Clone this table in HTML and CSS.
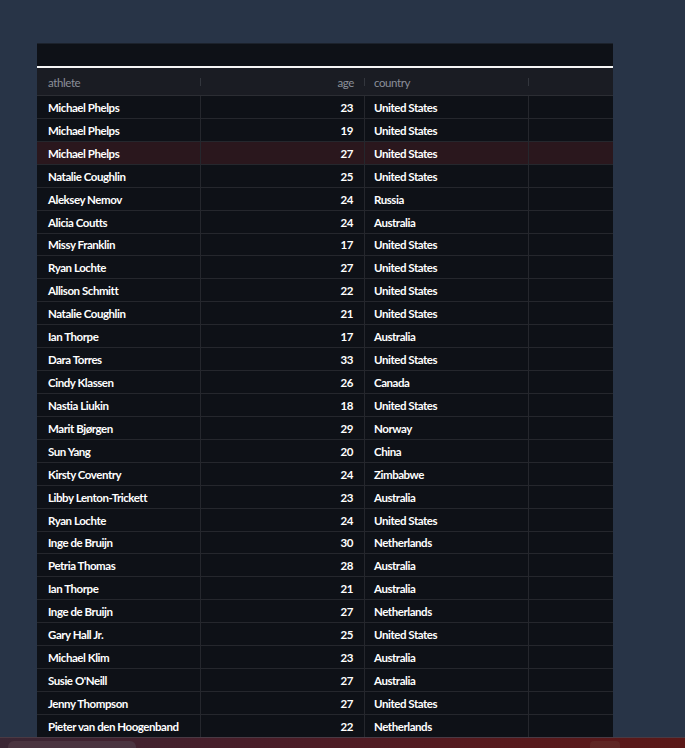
FILE: index.html
```html
<!DOCTYPE html>
<html>
<head>
<meta charset="utf-8">
<link rel="stylesheet" href="styles.css">
</head>
<body>
<div class="frame">
  <div class="toolbar"></div>
  <div class="grid">
    <div class="row head">
      <div class="cell">athlete<span class="grip"></span></div>
      <div class="cell num">age<span class="grip"></span></div>
      <div class="cell">country<span class="grip"></span></div>
      <div class="cell"></div>
    </div>
    <div class="row"><div class="cell">Michael Phelps</div><div class="cell num">23</div><div class="cell">United States</div><div class="cell"></div></div>
    <div class="row"><div class="cell">Michael Phelps</div><div class="cell num">19</div><div class="cell">United States</div><div class="cell"></div></div>
    <div class="row sel"><div class="cell">Michael Phelps</div><div class="cell num">27</div><div class="cell">United States</div><div class="cell"></div></div>
    <div class="row"><div class="cell">Natalie Coughlin</div><div class="cell num">25</div><div class="cell">United States</div><div class="cell"></div></div>
    <div class="row"><div class="cell">Aleksey Nemov</div><div class="cell num">24</div><div class="cell">Russia</div><div class="cell"></div></div>
    <div class="row"><div class="cell">Alicia Coutts</div><div class="cell num">24</div><div class="cell">Australia</div><div class="cell"></div></div>
    <div class="row"><div class="cell">Missy Franklin</div><div class="cell num">17</div><div class="cell">United States</div><div class="cell"></div></div>
    <div class="row"><div class="cell">Ryan Lochte</div><div class="cell num">27</div><div class="cell">United States</div><div class="cell"></div></div>
    <div class="row"><div class="cell">Allison Schmitt</div><div class="cell num">22</div><div class="cell">United States</div><div class="cell"></div></div>
    <div class="row"><div class="cell">Natalie Coughlin</div><div class="cell num">21</div><div class="cell">United States</div><div class="cell"></div></div>
    <div class="row"><div class="cell">Ian Thorpe</div><div class="cell num">17</div><div class="cell">Australia</div><div class="cell"></div></div>
    <div class="row"><div class="cell">Dara Torres</div><div class="cell num">33</div><div class="cell">United States</div><div class="cell"></div></div>
    <div class="row"><div class="cell">Cindy Klassen</div><div class="cell num">26</div><div class="cell">Canada</div><div class="cell"></div></div>
    <div class="row"><div class="cell">Nastia Liukin</div><div class="cell num">18</div><div class="cell">United States</div><div class="cell"></div></div>
    <div class="row"><div class="cell">Marit Bjørgen</div><div class="cell num">29</div><div class="cell">Norway</div><div class="cell"></div></div>
    <div class="row"><div class="cell">Sun Yang</div><div class="cell num">20</div><div class="cell">China</div><div class="cell"></div></div>
    <div class="row"><div class="cell">Kirsty Coventry</div><div class="cell num">24</div><div class="cell">Zimbabwe</div><div class="cell"></div></div>
    <div class="row"><div class="cell">Libby Lenton-Trickett</div><div class="cell num">23</div><div class="cell">Australia</div><div class="cell"></div></div>
    <div class="row"><div class="cell">Ryan Lochte</div><div class="cell num">24</div><div class="cell">United States</div><div class="cell"></div></div>
    <div class="row"><div class="cell">Inge de Bruijn</div><div class="cell num">30</div><div class="cell">Netherlands</div><div class="cell"></div></div>
    <div class="row"><div class="cell">Petria Thomas</div><div class="cell num">28</div><div class="cell">Australia</div><div class="cell"></div></div>
    <div class="row"><div class="cell">Ian Thorpe</div><div class="cell num">21</div><div class="cell">Australia</div><div class="cell"></div></div>
    <div class="row"><div class="cell">Inge de Bruijn</div><div class="cell num">27</div><div class="cell">Netherlands</div><div class="cell"></div></div>
    <div class="row"><div class="cell">Gary Hall Jr.</div><div class="cell num">25</div><div class="cell">United States</div><div class="cell"></div></div>
    <div class="row"><div class="cell">Michael Klim</div><div class="cell num">23</div><div class="cell">Australia</div><div class="cell"></div></div>
    <div class="row"><div class="cell">Susie O'Neill</div><div class="cell num">27</div><div class="cell">Australia</div><div class="cell"></div></div>
    <div class="row"><div class="cell">Jenny Thompson</div><div class="cell num">27</div><div class="cell">United States</div><div class="cell"></div></div>
    <div class="row"><div class="cell">Pieter van den Hoogenband</div><div class="cell num">22</div><div class="cell">Netherlands</div><div class="cell"></div></div>
  </div>
</div>
<div class="taskbar">
  <div class="search"></div>
  <div class="spot"></div>
</div>
</body>
</html>
```

FILE: styles.css
```css
html, body {
  margin: 0;
  padding: 0;
  height: 100%;
  overflow: hidden;
}
body {
  background: #283447;
  font-family: Lato, "Noto Sans", sans-serif;
  font-size: 12px;
  color: #ffffff;
}
.frame {
  margin: 43px 0 0 37px;
  width: 576px;
  background: #0e1117;
}
.toolbar {
  height: 22px;
  background: #0e1117;
  border-top: 1px solid #1c222c;
  border-bottom: 2px solid #f5f5f5;
}
.grid {
  display: flex;
  flex-direction: column;
}
.row {
  display: grid;
  grid-template-columns: 164px 164px 164px 84px;
  height: 21.93px;
  border-bottom: 1px solid #25272d;
  font-size: 11.5px;
  letter-spacing: -0.45px;
  font-weight: 700;
}
.row .cell {
  display: flex;
  align-items: center;
  padding: 1px 10px 0 11px;
  border-right: 1px solid #25272d;
  white-space: nowrap;
  overflow: hidden;
  position: relative;
}
.row .cell:last-child {
  border-right: none;
}
.row .cell.num {
  justify-content: flex-end;
  padding-right: 11px;
}
.row .cell:nth-child(3) {
  padding-left: 9px;
}
.row.head {
  height: 27px;
  background: #1a1c23;
  border-bottom: 1px solid #2b2d33;
  color: #8a8f99;
  font-size: 11.5px;
  font-weight: 400;
  letter-spacing: -0.4px;
}
.row.head .cell {
  border-right: none;
  padding-top: 2px;
}
.grip {
  position: absolute;
  right: 0;
  top: 10px;
  width: 1px;
  height: 8px;
  background: #33363d;
}
.row.sel {
  background: #2a171d;
}
.taskbar {
  position: fixed;
  left: 0;
  right: 0;
  bottom: 0;
  height: 10px;
  background: linear-gradient(90deg, #3a2634 0%, #4a1d28 40%, #561a1e 70%, #5a1818 100%);
  border-top: 1px solid #4a3a44;
}
.search {
  position: absolute;
  left: 8px;
  top: 3px;
  width: 128px;
  height: 14px;
  border-radius: 6px;
  background: #4a3440;
}
.spot {
  position: absolute;
  left: 590px;
  top: 3px;
  width: 30px;
  height: 14px;
  border-radius: 4px;
  background: #5e2624;
}
```
